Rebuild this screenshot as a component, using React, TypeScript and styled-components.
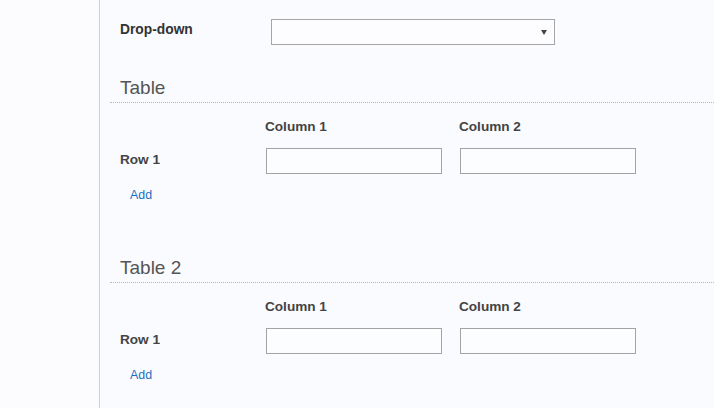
import * as React from "react"
import styled, {createGlobalStyle} from "styled-components"

const GlobalStyle = createGlobalStyle`
    html, body {
        margin: 0;
        padding: 0;
        background: #fafbfe;
        font-family: "Liberation Sans", Arial, sans-serif;
    }
`

const Page = styled.div`
    display: flex;
    min-height: 408px;
`

const Sidebar = styled.div`
    width: 99px;
    flex-shrink: 0;
    background: #fcfcff;
    border-right: 1px solid #cfcfd4;
`

const Main = styled.div`
    flex-grow: 1;
    padding-left: 10px;
`

const FieldRow = styled.div`
    display: flex;
    align-items: flex-start;
    padding: 19px 0 0 10px;
`

const FieldLabel = styled.div`
    width: 151px;
    padding-top: 3px;
    font-size: 13.8px;
    font-weight: bold;
    color: #333;
`

const Select = styled.div`
    position: relative;
    width: 282px;
    height: 24px;
    border: 1px solid #a6a6a6;
    background: #fdfdff;

    &::after {
        content: "";
        position: absolute;
        right: 7px;
        top: 10px;
        border-left: 3px solid transparent;
        border-right: 3px solid transparent;
        border-top: 5px solid #444;
    }
`

const Section = styled.div<{ $top: number }>`
    margin-top: ${p => p.$top}px;
`

const Heading = styled.h2`
    margin: 0;
    padding: 1px 0 2px 10px;
    font-size: 19px;
    line-height: 24px;
    font-weight: normal;
    color: #555;
    border-bottom: 1px dotted #b8b8b8;
`

const Grid = styled.div`
    display: grid;
    grid-template-columns: 128px 176px 176px;
    column-gap: 18px;
    align-items: center;
    padding: 16px 0 0 10px;
    row-gap: 13px;
`

const ColHead = styled.div`
    font-size: 13.6px;
    font-weight: bold;
    color: #444;
    line-height: 16px;
    margin-left: -1px;
`

const RowLabel = styled.div`
    font-size: 13.6px;
    font-weight: bold;
    color: #444;
    margin-top: -4px;
`

const Input = styled.input`
    box-sizing: border-box;
    width: 176px;
    height: 26px;
    border: 1px solid #a3a3a3;
    background: #fcfdff;
    margin: 0;
`

const AddLink = styled.a`
    display: inline-block;
    margin: 13px 0 0 20px;
    font-size: 12.4px;
    line-height: 16px;
    color: #1a6fc4;
    text-decoration: none;
    cursor: pointer;
`

const TableSection = ({title, top}: { title: string, top: number }) => (
    <Section $top={top}>
        <Heading>{title}</Heading>
        <Grid>
            <div/>
            <ColHead>Column 1</ColHead>
            <ColHead>Column 2</ColHead>
            <RowLabel>Row 1</RowLabel>
            <Input/>
            <Input/>
        </Grid>
        <AddLink>Add</AddLink>
    </Section>
)

export default function App() {
    return (
        <>
            <GlobalStyle/>
            <Page>
                <Sidebar/>
                <Main>
                    <FieldRow>
                        <FieldLabel>Drop-down</FieldLabel>
                        <Select/>
                    </FieldRow>
                    <TableSection title="Table" top={30}/>
                    <TableSection title="Table 2" top={52}/>
                </Main>
            </Page>
        </>
    )
}
